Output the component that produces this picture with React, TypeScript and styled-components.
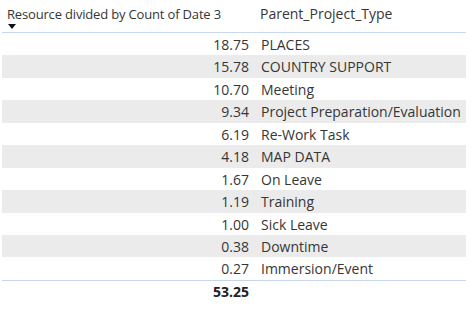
import React from 'react';
import styled, { createGlobalStyle } from 'styled-components';

const GlobalStyle = createGlobalStyle`
  body {
    margin: 0;
    background: #ffffff;
    font-family: 'Open Sans', 'Noto Sans', sans-serif;
    color: #363636;
  }
`;

const Wrap = styled.div`
  width: 474px;
  height: 326px;
  padding: 0 8px 0 2px;
  box-sizing: border-box;
`;

const Grid = styled.div`
  display: grid;
  grid-template-columns: 249px 1fr;
  font-size: 14px;
`;

const HeadCell = styled.div<{ $first?: boolean }>`
  position: relative;
  height: 33px;
  padding: ${(p) => (p.$first ? '5px 0 0 5px' : '4px 0 0 9px')};
  box-sizing: border-box;
  border-bottom: 1px solid #c5d6ee;
  white-space: nowrap;
  font-size: ${(p) => (p.$first ? '13px' : '14px')};
  letter-spacing: ${(p) => (p.$first ? '-0.17px' : '0')};
`;

const SortArrow = styled.span`
  position: absolute;
  left: 6px;
  top: 24px;
  width: 0;
  height: 0;
  border-left: 4px solid transparent;
  border-right: 4px solid transparent;
  border-top: 5px solid #111111;
`;

const Cell = styled.div<{ $striped: boolean; $num?: boolean }>`
  height: 22.45px;
  line-height: 23px;
  background: ${(p) => (p.$striped ? '#ebebeb' : 'transparent')};
  text-align: ${(p) => (p.$num ? 'right' : 'left')};
  padding: ${(p) => (p.$num ? '0 2px 0 0' : '0 0 0 10px')};
  white-space: nowrap;
`;

const TotalCell = styled.div`
  border-top: 1px solid #c5d6ee;
  height: 24px;
  line-height: 22px;
  font-weight: 700;
  text-align: right;
  padding-right: 2px;
  color: #222222;
`;

const rows: [string, string][] = [
  ['18.75', 'PLACES'],
  ['15.78', 'COUNTRY SUPPORT'],
  ['10.70', 'Meeting'],
  ['9.34', 'Project Preparation/Evaluation'],
  ['6.19', 'Re-Work Task'],
  ['4.18', 'MAP DATA'],
  ['1.67', 'On Leave'],
  ['1.19', 'Training'],
  ['1.00', 'Sick Leave'],
  ['0.38', 'Downtime'],
  ['0.27', 'Immersion/Event'],
];

const App = () => {
  return (
    <Wrap>
      <GlobalStyle />
      <Grid>
        <HeadCell $first>
          Resource divided by Count of Date 3
          <SortArrow />
        </HeadCell>
        <HeadCell>Parent_Project_Type</HeadCell>
        {rows.map(([value, type], i) => (
          <React.Fragment key={type}>
            <Cell $num $striped={i % 2 === 1}>
              {value}
            </Cell>
            <Cell $striped={i % 2 === 1}>{type}</Cell>
          </React.Fragment>
        ))}
        <TotalCell>53.25</TotalCell>
        <TotalCell />
      </Grid>
    </Wrap>
  );
};

export default App;
